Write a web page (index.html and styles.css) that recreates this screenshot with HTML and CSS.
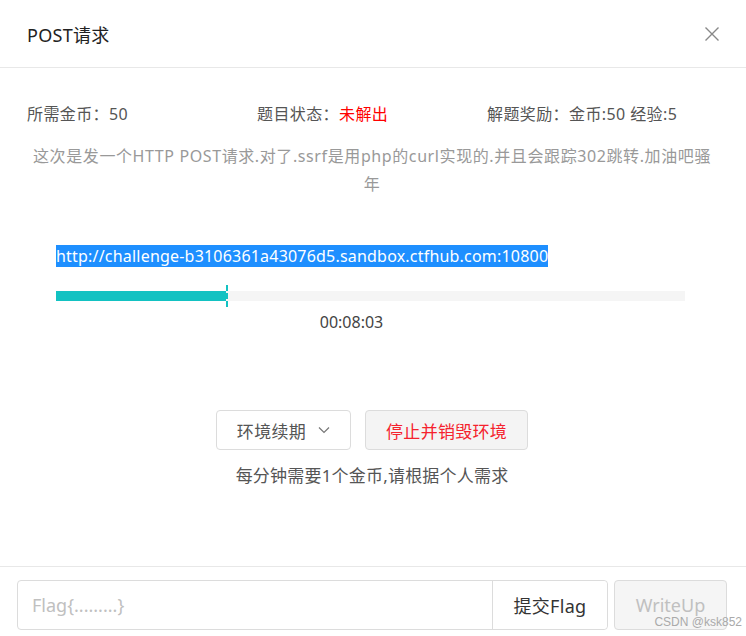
FILE: index.html
```html
<!DOCTYPE html>
<html lang="zh-CN">
<head>
  <meta charset="UTF-8" />
  <title>POST请求</title>
  <link rel="stylesheet" href="styles.css">
</head>
<body>

<div class="modal">
  <div class="modal-header">
    <span class="modal-title">POST请求</span>
    <span class="modal-close">
      <svg width="16" height="16" viewBox="0 0 16 16"><path d="M1.5 1.5 L14.5 14.5 M14.5 1.5 L1.5 14.5" stroke="#888" stroke-width="1.4" fill="none"/></svg>
    </span>
  </div>

  <div class="modal-body">
    <div class="info-row">
      <div class="info-item">所需金币：50</div>
      <div class="info-item">题目状态：<span class="unsolved">未解出</span></div>
      <div class="info-item">解题奖励：金币:50 经验:5</div>
    </div>
    <p class="desc">这次是发一个HTTP POST请求.对了.ssrf是用php的curl实现的.并且会跟踪302跳转.加油吧骚年</p>

    <div class="env">
      <div class="url"><span class="url-sel">http://challenge-b3106361a43076d5.sandbox.ctfhub.com:10800</span></div>
      <div class="progress">
        <div class="progress-fill" style="width: 27%"></div>
        <div class="progress-mark" style="left: 27%"></div>
      </div>
      <div class="timer">00:08:03</div>
    </div>

    <div class="actions">
      <button class="btn btn-renew">环境续期
        <svg width="12" height="8" viewBox="0 0 12 8"><path d="M1 1.5 L6 6.5 L11 1.5" stroke="#777" stroke-width="1.2" fill="none"/></svg>
      </button>
      <button class="btn btn-stop">停止并销毁环境</button>
    </div>
    <div class="tip">每分钟需要1个金币,请根据个人需求</div>
  </div>

  <div class="modal-footer">
    <div class="flag-group">
      <input class="flag-input" type="text" placeholder="Flag{.........}">
      <button class="btn-submit">提交Flag</button>
    </div>
    <button class="btn-writeup">WriteUp</button>
  </div>
  <div class="watermark">CSDN @ksk852</div>
</div>

</body>
</html>
```

FILE: styles.css
```css
body { margin: 0; padding: 0; background: #fff; font-family: "Noto Sans", "Noto Sans CJK SC", sans-serif; color: #333; }
.modal { position: relative; width: 746px; height: 636px; background: #fff; overflow: hidden; }
.modal-header { height: 68px; border-bottom: 1px solid #e8e8e8; display: flex; align-items: center; justify-content: space-between; padding: 0 26px 0 27px; box-sizing: border-box; }
.modal-title { font-size: 18px; color: #222; letter-spacing: 0.3px; }
.modal-close { display: flex; }
.modal-body { padding: 0 29px 0 27px; }
.info-row { display: flex; margin-top: 32px; font-size: 16px; color: #555; line-height: 28px; letter-spacing: 0.4px; }
.info-item { flex: 1; }
.unsolved { color: #f00; }
.desc { margin: 14px 0 0; text-align: center; color: #999; font-size: 16px; line-height: 28px; letter-spacing: 0.6px; }
.env { padding: 0 32px 0 29px; margin-top: 46px; }
.url { font-size: 16px; line-height: 24px; letter-spacing: 0.2px; }
.url-sel { background: #1e8fff; color: #fff; }
.progress { position: relative; height: 10px; background: #f5f5f5; margin-top: 23px; }
.progress-fill { height: 100%; background: #13c2c2; }
.progress-mark { position: absolute; top: -6px; height: 22px; border-left: 2px dashed #13c2c2; }
.timer { text-align: center; font-size: 16px; color: #444; margin-top: 9px; padding-right: 38px; line-height: 24px; }
.actions { display: flex; justify-content: center; gap: 14px; margin-top: 76px; }
.btn { height: 40px; border: 1px solid #dcdcdc; border-radius: 4px; font-family: inherit; font-size: 17px; padding: 0 20px; display: flex; align-items: center; gap: 12px; letter-spacing: 0.3px; }
.btn-renew { background: #fff; color: #555; }
.btn-stop { background: #f4f4f4; color: #f5222d; }
.tip { text-align: center; color: #555; font-size: 17px; margin-top: 13px; line-height: 26px; letter-spacing: 0.2px; }
.modal-footer { position: absolute; left: 0; right: 0; bottom: 0; height: 70px; box-sizing: border-box; border-top: 1px solid #e8e8e8; display: flex; align-items: flex-start; padding: 13px 19px 0 17px; gap: 6px; }
.flag-group { display: flex; height: 50px; border: 1px solid #dcdcdc; border-radius: 4px; flex: 1; box-sizing: border-box; }
.flag-input { flex: 1; border: none; outline: none; padding: 0 14px; font-family: inherit; font-size: 18px; background: transparent; }
.flag-input::placeholder { color: #c0c0c0; }
.btn-submit { width: 115px; border: none; border-left: 1px solid #dcdcdc; background: #fff; font-family: inherit; font-size: 18px; color: #333; border-radius: 0 4px 4px 0; letter-spacing: 0.3px; }
.btn-writeup { width: 113px; height: 50px; border: 1px solid #dcdcdc; border-radius: 4px; background: #f5f5f5; color: #c0c0c0; font-family: inherit; font-size: 18px; }
.watermark { position: absolute; right: 4px; bottom: 7px; font-size: 12px; color: #aaa; font-family: "Liberation Sans", sans-serif; }
```
